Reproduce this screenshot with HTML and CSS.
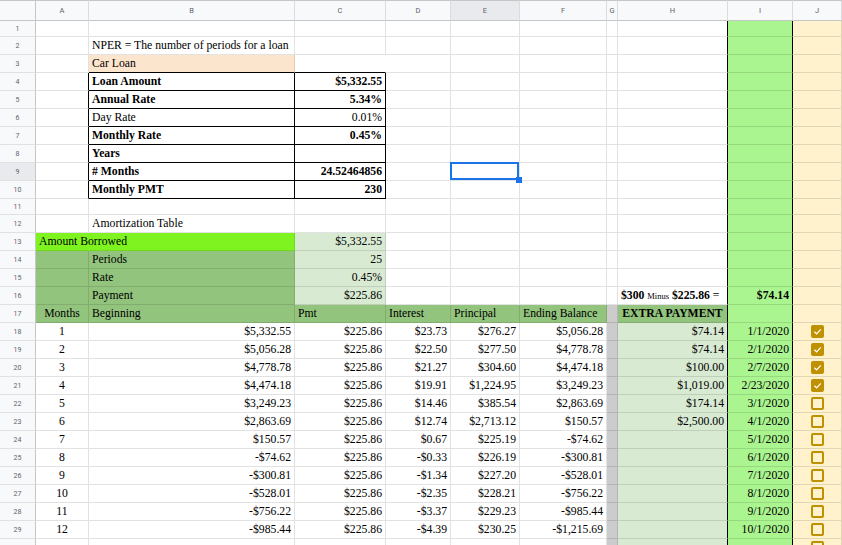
FILE: index.html
```html
<!DOCTYPE html>
<html>
<head>
<meta charset="utf-8">
<link rel="stylesheet" href="styles.css">
</head>
<body>
<div class="sheet">
<!-- header -->
<div class="corner"></div><div class="ch">A</div><div class="ch">B</div><div class="ch">C</div><div class="ch">D</div><div class="ch sel">E</div><div class="ch">F</div><div class="ch">G</div><div class="ch">H</div><div class="ch">I</div><div class="ch">J</div>
<!-- 1 -->
<div class="rh">1</div><div class="c"></div><div class="c"></div><div class="c"></div><div class="c"></div><div class="c"></div><div class="c"></div><div class="c"></div><div class="c hb"></div><div class="c gi"></div><div class="c yj"></div>
<!-- 2 -->
<div class="rh">2</div><div class="c"></div><div class="c">NPER = The number of periods for a loan</div><div class="c"></div><div class="c"></div><div class="c"></div><div class="c"></div><div class="c"></div><div class="c hb"></div><div class="c gi"></div><div class="c yj"></div>
<!-- 3 -->
<div class="rh">3</div><div class="c"></div><div class="c pe bb">Car Loan</div><div class="c bb nr"></div><div class="c"></div><div class="c"></div><div class="c"></div><div class="c"></div><div class="c hb"></div><div class="c gi"></div><div class="c yj"></div>
<!-- 4 -->
<div class="rh">4</div><div class="c ab"></div><div class="c tb b">Loan Amount</div><div class="c tb b r">$5,332.55</div><div class="c"></div><div class="c"></div><div class="c"></div><div class="c"></div><div class="c hb"></div><div class="c gi"></div><div class="c yj"></div>
<!-- 5 -->
<div class="rh">5</div><div class="c ab"></div><div class="c tb b">Annual Rate</div><div class="c tb b r">5.34%</div><div class="c"></div><div class="c"></div><div class="c"></div><div class="c"></div><div class="c hb"></div><div class="c gi"></div><div class="c yj"></div>
<!-- 6 -->
<div class="rh">6</div><div class="c ab"></div><div class="c tb">Day Rate</div><div class="c tb r">0.01%</div><div class="c"></div><div class="c"></div><div class="c"></div><div class="c"></div><div class="c hb"></div><div class="c gi"></div><div class="c yj"></div>
<!-- 7 -->
<div class="rh">7</div><div class="c ab"></div><div class="c tb b">Monthly Rate</div><div class="c tb b r">0.45%</div><div class="c"></div><div class="c"></div><div class="c"></div><div class="c"></div><div class="c hb"></div><div class="c gi"></div><div class="c yj"></div>
<!-- 8 -->
<div class="rh">8</div><div class="c ab"></div><div class="c tb b">Years</div><div class="c tb b r"></div><div class="c"></div><div class="c"></div><div class="c"></div><div class="c"></div><div class="c hb"></div><div class="c gi"></div><div class="c yj"></div>
<!-- 9 -->
<div class="rh sel">9</div><div class="c ab"></div><div class="c tb b"># Months</div><div class="c tb b r">24.52464856</div><div class="c"></div><div class="c active"><span class="selbox"></span><span class="handle"></span></div><div class="c"></div><div class="c"></div><div class="c hb"></div><div class="c gi"></div><div class="c yj"></div>
<!-- 10 -->
<div class="rh">10</div><div class="c ab"></div><div class="c tb b">Monthly PMT</div><div class="c tb b r">230</div><div class="c"></div><div class="c"></div><div class="c"></div><div class="c"></div><div class="c hb"></div><div class="c gi"></div><div class="c yj"></div>
<!-- 11 -->
<div class="rh">11</div><div class="c"></div><div class="c"></div><div class="c"></div><div class="c"></div><div class="c"></div><div class="c"></div><div class="c"></div><div class="c hb"></div><div class="c gi"></div><div class="c yj"></div>
<!-- 12 -->
<div class="rh">12</div><div class="c"></div><div class="c">Amortization Table</div><div class="c"></div><div class="c"></div><div class="c"></div><div class="c"></div><div class="c"></div><div class="c hb"></div><div class="c gi"></div><div class="c yj"></div>
<!-- 13 -->
<div class="rh">13</div><div class="c g1 nr ov">Amount Borrowed</div><div class="c g1"></div><div class="c lg r">$5,332.55</div><div class="c"></div><div class="c"></div><div class="c"></div><div class="c"></div><div class="c hb"></div><div class="c gi"></div><div class="c yj"></div>
<!-- 14 -->
<div class="rh">14</div><div class="c mg"></div><div class="c mg">Periods</div><div class="c lg r">25</div><div class="c"></div><div class="c"></div><div class="c"></div><div class="c"></div><div class="c hb"></div><div class="c gi"></div><div class="c yj"></div>
<!-- 15 -->
<div class="rh">15</div><div class="c mg"></div><div class="c mg">Rate</div><div class="c lg r">0.45%</div><div class="c"></div><div class="c"></div><div class="c"></div><div class="c"></div><div class="c hb"></div><div class="c gi"></div><div class="c yj"></div>
<!-- 16 -->
<div class="rh">16</div><div class="c mg"></div><div class="c mg">Payment</div><div class="c lg r">$225.86</div><div class="c"></div><div class="c"></div><div class="c"></div><div class="c"></div><div class="c hb calc"><b>$300</b>&nbsp;<span class="sm">Minus</span>&nbsp;<b>$225.86</b>&nbsp;=</div><div class="c gi b r">$74.14</div><div class="c yj"></div>
<!-- 17 -->
<div class="rh">17</div><div class="c mg m">Months</div><div class="c mg">Beginning</div><div class="c mg">Pmt</div><div class="c mg">Interest</div><div class="c mg">Principal</div><div class="c mg">Ending Balance</div><div class="c gy"></div><div class="c mg hb b m">EXTRA PAYMENT</div><div class="c gi"></div><div class="c yj"></div>
<!-- 18 -->
<div class="rh">18</div><div class="c m">1</div><div class="c r">$5,332.55</div><div class="c r">$225.86</div><div class="c r">$23.73</div><div class="c r">$276.27</div><div class="c r">$5,056.28</div><div class="c gy"></div><div class="c lg hb r">$74.14</div><div class="c gi r">1/1/2020</div><div class="c yj"><span class="box on"><svg viewBox="0 0 12 12" width="11" height="11"><path d="M2.6 6.3 L5 8.5 L9.6 3.6" fill="none" stroke="#fff" stroke-width="1.3"/></svg></span></div>
<!-- 19 -->
<div class="rh">19</div><div class="c m">2</div><div class="c r">$5,056.28</div><div class="c r">$225.86</div><div class="c r">$22.50</div><div class="c r">$277.50</div><div class="c r">$4,778.78</div><div class="c gy"></div><div class="c lg hb r">$74.14</div><div class="c gi r">2/1/2020</div><div class="c yj"><span class="box on"><svg viewBox="0 0 12 12" width="11" height="11"><path d="M2.6 6.3 L5 8.5 L9.6 3.6" fill="none" stroke="#fff" stroke-width="1.3"/></svg></span></div>
<!-- 20 -->
<div class="rh">20</div><div class="c m">3</div><div class="c r">$4,778.78</div><div class="c r">$225.86</div><div class="c r">$21.27</div><div class="c r">$304.60</div><div class="c r">$4,474.18</div><div class="c gy"></div><div class="c lg hb r">$100.00</div><div class="c gi r">2/7/2020</div><div class="c yj"><span class="box on"><svg viewBox="0 0 12 12" width="11" height="11"><path d="M2.6 6.3 L5 8.5 L9.6 3.6" fill="none" stroke="#fff" stroke-width="1.3"/></svg></span></div>
<!-- 21 -->
<div class="rh">21</div><div class="c m">4</div><div class="c r">$4,474.18</div><div class="c r">$225.86</div><div class="c r">$19.91</div><div class="c r">$1,224.95</div><div class="c r">$3,249.23</div><div class="c gy"></div><div class="c lg hb r">$1,019.00</div><div class="c gi r">2/23/2020</div><div class="c yj"><span class="box on"><svg viewBox="0 0 12 12" width="11" height="11"><path d="M2.6 6.3 L5 8.5 L9.6 3.6" fill="none" stroke="#fff" stroke-width="1.3"/></svg></span></div>
<!-- 22 -->
<div class="rh">22</div><div class="c m">5</div><div class="c r">$3,249.23</div><div class="c r">$225.86</div><div class="c r">$14.46</div><div class="c r">$385.54</div><div class="c r">$2,863.69</div><div class="c gy"></div><div class="c lg hb r">$174.14</div><div class="c gi r">3/1/2020</div><div class="c yj"><span class="box"></span></div>
<!-- 23 -->
<div class="rh">23</div><div class="c m">6</div><div class="c r">$2,863.69</div><div class="c r">$225.86</div><div class="c r">$12.74</div><div class="c r">$2,713.12</div><div class="c r">$150.57</div><div class="c gy"></div><div class="c lg hb r">$2,500.00</div><div class="c gi r">4/1/2020</div><div class="c yj"><span class="box"></span></div>
<!-- 24 -->
<div class="rh">24</div><div class="c m">7</div><div class="c r">$150.57</div><div class="c r">$225.86</div><div class="c r">$0.67</div><div class="c r">$225.19</div><div class="c r">-$74.62</div><div class="c gy"></div><div class="c lg hb r"></div><div class="c gi r">5/1/2020</div><div class="c yj"><span class="box"></span></div>
<!-- 25 -->
<div class="rh">25</div><div class="c m">8</div><div class="c r">-$74.62</div><div class="c r">$225.86</div><div class="c r">-$0.33</div><div class="c r">$226.19</div><div class="c r">-$300.81</div><div class="c gy"></div><div class="c lg hb r"></div><div class="c gi r">6/1/2020</div><div class="c yj"><span class="box"></span></div>
<!-- 26 -->
<div class="rh">26</div><div class="c m">9</div><div class="c r">-$300.81</div><div class="c r">$225.86</div><div class="c r">-$1.34</div><div class="c r">$227.20</div><div class="c r">-$528.01</div><div class="c gy"></div><div class="c lg hb r"></div><div class="c gi r">7/1/2020</div><div class="c yj"><span class="box"></span></div>
<!-- 27 -->
<div class="rh">27</div><div class="c m">10</div><div class="c r">-$528.01</div><div class="c r">$225.86</div><div class="c r">-$2.35</div><div class="c r">$228.21</div><div class="c r">-$756.22</div><div class="c gy"></div><div class="c lg hb r"></div><div class="c gi r">8/1/2020</div><div class="c yj"><span class="box"></span></div>
<!-- 28 -->
<div class="rh">28</div><div class="c m">11</div><div class="c r">-$756.22</div><div class="c r">$225.86</div><div class="c r">-$3.37</div><div class="c r">$229.23</div><div class="c r">-$985.44</div><div class="c gy"></div><div class="c lg hb r"></div><div class="c gi r">9/1/2020</div><div class="c yj"><span class="box"></span></div>
<!-- 29 -->
<div class="rh">29</div><div class="c m">12</div><div class="c r">-$985.44</div><div class="c r">$225.86</div><div class="c r">-$4.39</div><div class="c r">$230.25</div><div class="c r">-$1,215.69</div><div class="c gy"></div><div class="c lg hb r"></div><div class="c gi r">10/1/2020</div><div class="c yj"><span class="box"></span></div>
<!-- 30 (partly visible) -->
<div class="rh"></div><div class="c"></div><div class="c"></div><div class="c"></div><div class="c"></div><div class="c"></div><div class="c"></div><div class="c gy"></div><div class="c lg hb"></div><div class="c gi"></div><div class="c yj top"><span class="box"></span></div>
</div>
</body>
</html>
```
FILE: styles.css
```css
* { box-sizing: border-box; }
html, body { margin: 0; padding: 0; }
body {
  background: #fff;
  font-family: "Liberation Serif", "Times New Roman", serif;
  font-size: 11.7px;
  color: #000;
  overflow: hidden;
  width: 842px;
  height: 545px;
}
.sheet {
  display: grid;
  grid-template-columns: 36px 53px 206px 91px 65px 69px 87px 11px 110px 65px 49px;
  grid-template-rows: 21px 16px repeat(9, 18px) 16px repeat(19, 18px);
  overflow: hidden;
  height: 545px;
}
.c {
  border-right: 1px solid rgba(0, 0, 0, 0.115);
  border-bottom: 1px solid rgba(0, 0, 0, 0.115);
  display: flex;
  align-items: flex-end;
  padding: 0 3px 1px 3px;
  white-space: nowrap;
  line-height: 14px;
  overflow: hidden;
}
.corner, .ch {
  background: #f8f9fa;
  border-top: 1px solid #c4c7c5;
  border-bottom: 1px solid #c4c7c5;
  border-right: 1px solid #dadce0;
}
.corner { border-right: 1px solid #c4c7c5; }
.ch {
  display: flex;
  align-items: center;
  justify-content: center;
  font-family: Roboto, "Liberation Sans", sans-serif;
  font-size: 7.5px;
  color: #5f6368;
}
.rh {
  background: #f8f9fa;
  border-right: 1px solid #c4c7c5;
  border-bottom: 1px solid #e1e1e1;
  display: flex;
  align-items: center;
  justify-content: center;
  font-family: Roboto, "Liberation Sans", sans-serif;
  font-size: 7px;
  color: #5f6368;
}
.sel { background: #e8eaed; }
.r { justify-content: flex-end; }
.m { justify-content: center; }
.b { font-weight: bold; }
.ov { overflow: visible; position: relative; z-index: 1; }
.nr { border-right-color: transparent; }
.pe { background: #fce5cd; }
.g1 { background: #7ff320; }
.mg { background: #93c47d; }
.lg { background: #d9ead3; }
.gy { background: #cccccc; }
.gi { background: #abf590; border-right: 1px solid #000; }
.yj { background: #fff2cc; justify-content: center; align-items: center; padding: 0 0 1px 0; }
.yj.top { align-items: flex-start; padding-top: 2px; }
.hb { border-right: 1px solid #000; }
.bb { border-bottom: 1px solid #000; }
.tb { border-right: 1px solid #000; border-bottom: 1px solid #000; }
.ab { border-right: 1px solid #000; }
.calc { padding-left: 3px; }
.calc b { font-weight: bold; }
.sm { font-size: 8.5px; }
.active { position: relative; overflow: visible; z-index: 2; }
.selbox {
  position: absolute;
  left: -1px; top: -1px; right: 0; bottom: 0;
  border: 2px solid #1a73e8;
}
.handle {
  position: absolute;
  right: -3px; bottom: -3px;
  width: 6px; height: 6px;
  background: #1a73e8;
}
.box {
  flex: none;
  width: 13px;
  height: 13px;
  border: 2px solid #bf9000;
  border-radius: 2px;
  display: flex;
  align-items: center;
  justify-content: center;
}
.box.on { background: #bf9000; }
.box svg { display: block; flex: none; }
```
